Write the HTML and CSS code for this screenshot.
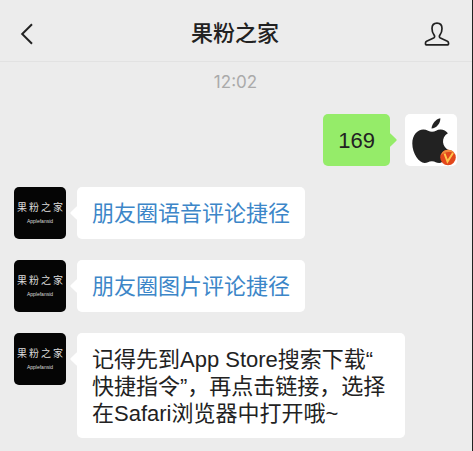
FILE: index.html
```html
<!DOCTYPE html>
<html lang="zh-CN">
<head>
<meta charset="utf-8">
<meta name="viewport" content="width=device-width, initial-scale=1">
<title>果粉之家</title>
<link rel="stylesheet" href="styles.css">
</head>
<body>
<header class="bar">
  <button class="bar-button" type="button" aria-label="返回">
    <svg width="14" height="24" viewBox="0 0 14 24"><path d="M12 2.200 2.200 12 12 21.800" fill="none" stroke="#222" stroke-width="2"/></svg>
  </button>
  <h1 class="title">果粉之家</h1>
  <button class="bar-button" type="button" aria-label="联系人">
    <svg width="26" height="24" viewBox="0 0 26 24"><path d="M13 1.200C9.900 1.200 8 3.400 8 6.600c0 2.700.8 4.900 2 6.300 1 1.200.8 2.600-.4 3.200L2.600 19.300c-.8.400-1.100.900-1.100 1.700v1.100c0 .5.200.7.700.7h21.600c.5 0 .7-.2.700-.7V21c0-.8-.3-1.300-1.100-1.700l-7-3.200c-1.200-.6-1.400-2-.4-3.200 1.200-1.400 2-3.600 2-6.300C18 3.400 16.100 1.200 13 1.200Z" fill="none" stroke="#222" stroke-width="1.700" stroke-linejoin="round"/></svg>
  </button>
</header>
<main class="chat">
  <time class="time">12:02</time>
  <div class="row sent">
    <p class="bubble">169</p>
    <svg class="avatar photo" viewBox="0 0 52 52" role="img" aria-label="我的头像">
      <path d="M26.500 14.500C27 9.500 30.500 5.300 35.300 4.200c.5 4.600-3.800 10.100-8.800 10.300Z" fill="#222"/>
      <path d="M27 17.800c3.200 0 4.800-2.300 8.600-2.300 3 0 5.500 1.400 7.300 3.800-7.300 4.200-6.100 14.200 1.400 17.200-1.700 4.700-5.600 12.600-10.100 12.600-2.900 0-3.900-1.800-7.300-1.800s-4.600 1.800-7.300 1.800C14 49.100 7.300 39.500 7.300 29.600c0-8.800 5.400-14.100 11-14.100 3.600 0 6.200 2.300 8.700 2.300Z" fill="#222"/>
      <circle cx="43" cy="43.500" r="7.800" fill="#e2471b"/>
      <path d="M36 41a7.500 7.500 0 0 1 13.800-1.200C46 37 40 37.500 36 41Z" fill="#f08a3c"/>
      <path d="m39.500 39.500 3 8 5.500-8.500" fill="none" stroke="#ffc44a" stroke-width="2"/>
    </svg>
  </div>
  <div class="row">
    <div class="avatar brand"><span class="brand-name">果粉之家</span><span class="brand-id">Applefansid</span></div>
    <p class="bubble"><a href="#voice">朋友圈语音评论捷径</a></p>
  </div>
  <div class="row">
    <div class="avatar brand"><span class="brand-name">果粉之家</span><span class="brand-id">Applefansid</span></div>
    <p class="bubble"><a href="#image">朋友圈图片评论捷径</a></p>
  </div>
  <div class="row">
    <div class="avatar brand"><span class="brand-name">果粉之家</span><span class="brand-id">Applefansid</span></div>
    <p class="bubble long">记得先到App Store搜索下载“<br>快捷指令”，再点击链接，选择<br>在Safari浏览器中打开哦~</p>
  </div>
</main>
</body>
</html>
```
FILE: styles.css
```css
* {
  box-sizing: border-box;
}

body {
  margin: 0;
  min-height: 100vh;
  background: #ececec;
  border-right: 1px solid #222;
  color: #222;
  font-family: "Liberation Sans", "Noto Sans CJK SC", sans-serif;
}

.bar {
  display: flex;
  align-items: center;
  justify-content: space-between;
  height: 62px;
  padding: 6px 22px 0 20px;
  border-bottom: 1px solid #e2e2e2;
}

.bar-button {
  display: flex;
  width: 26px;
  padding: 0;
  border: 0;
  background: none;
}

.title {
  margin: 0;
  font-size: 22px;
  font-weight: 500;
  line-height: 28px;
}

.chat {
  display: flex;
  flex-direction: column;
  gap: 21px;
  padding: 9px 15px 12px 14px;
}

.time {
  align-self: center;
  color: #aaa;
  font-family: Inter, sans-serif;
  font-size: 17px;
  line-height: 22px;
}

.row {
  display: flex;
  align-items: flex-start;
  gap: 11px;
}

.sent {
  justify-content: flex-end;
  gap: 15px;
}

.avatar {
  flex: none;
  width: 52px;
  height: 52px;
  border-radius: 5px;
}

.photo {
  background: #fff;
}

.brand {
  display: flex;
  flex-direction: column;
  align-items: center;
  justify-content: center;
  gap: 2px;
  background: #050505;
  color: #ddd;
  white-space: nowrap;
}

.brand-name {
  padding-left: 2px;
  font-size: 10px;
  line-height: 14px;
  letter-spacing: 2px;
}

.brand-id {
  font-size: 5px;
  line-height: 8px;
}

.bubble {
  position: relative;
  min-height: 52px;
  margin: 0;
  padding: 13px 15px 11px;
  border-radius: 5px;
  background: #fff;
  font-size: 22px;
  line-height: 27px;
}

.long {
  width: 74%;
}

.bubble::before {
  content: "";
  position: absolute;
  top: 21px;
  left: -5px;
  width: 10px;
  height: 10px;
  border-radius: 1px;
  background: inherit;
  transform: rotate(45deg);
}

.sent .bubble {
  background: #95ec69;
}

.sent .bubble::before {
  right: -5px;
  left: auto;
}

.bubble a {
  color: #3c86c8;
  text-decoration: none;
}
```
